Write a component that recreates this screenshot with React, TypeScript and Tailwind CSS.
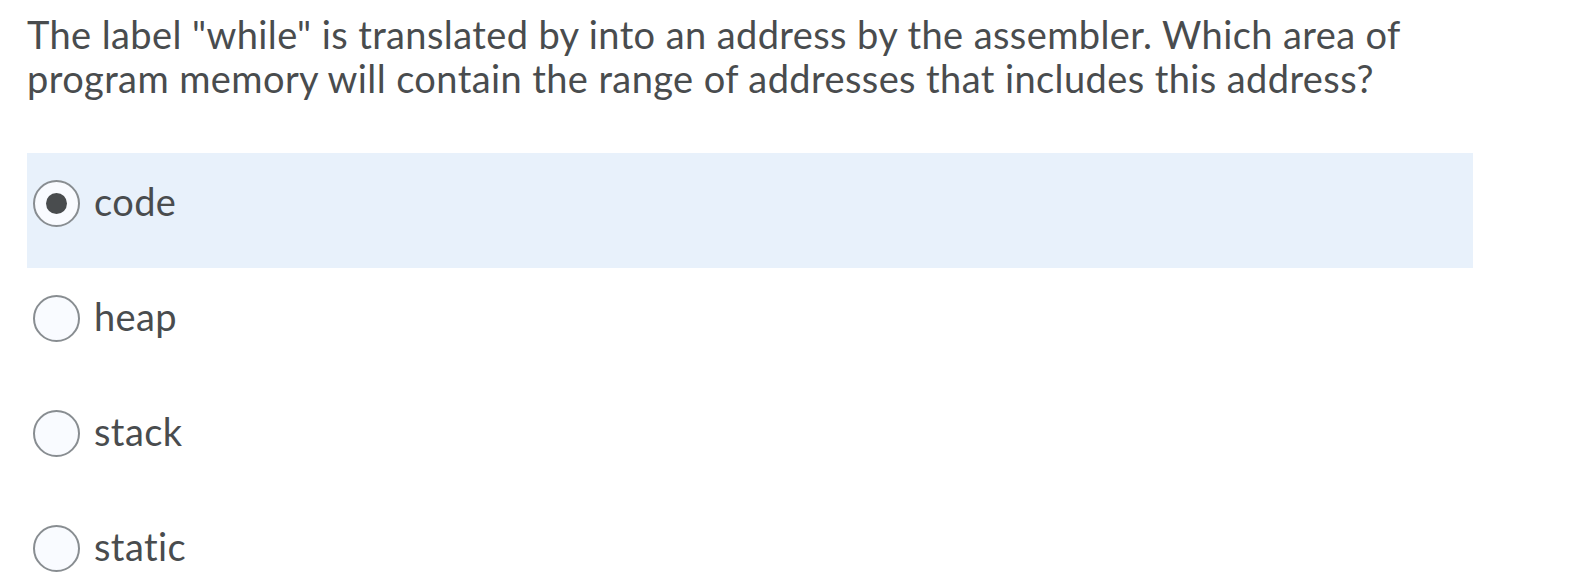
const options = [
  { label: 'code', selected: true },
  { label: 'heap', selected: false },
  { label: 'stack', selected: false },
  { label: 'static', selected: false },
];

function Radio({ checked }: { checked: boolean }) {
  return (
    <span className="flex h-[47px] w-[47px] shrink-0 items-center justify-center rounded-full border-2 border-[#888d91] bg-[#f9fbff]">
      {checked && <span className="h-[21px] w-[21px] rounded-full bg-[#494c4e]" />}
    </span>
  );
}

export default function App() {
  return (
    <div className="h-[580px] overflow-hidden bg-white font-['Lato',sans-serif] text-[#494c4e]">
      <div className="w-[1473px] pl-[27px] pt-[12px]">
        {/* Question */}
        <p className="text-[38px] leading-[44px] tracking-[0.4px]">
          The label "while" is translated by into an address by the assembler. Which area of
          program memory will contain the range of addresses that includes this address?
        </p>

        {/* Choices */}
        <div className="mt-[53px]">
          {options.map((opt) => (
            <label
              key={opt.label}
              className={`flex h-[115px] items-start gap-[14px] pl-[6px] pt-[27px] ${
                opt.selected ? 'bg-[#e8f1fb]' : ''
              }`}
            >
              <Radio checked={opt.selected} />
              <span className="text-[38px] leading-[42px] tracking-[0.4px]">{opt.label}</span>
            </label>
          ))}
        </div>
      </div>
    </div>
  );
}
